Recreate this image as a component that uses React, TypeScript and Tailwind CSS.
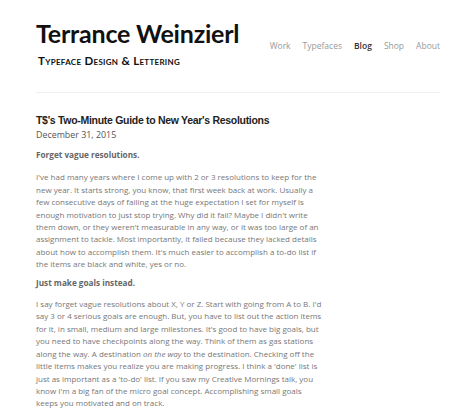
import React from "react";

const nav = ["Work", "Typefaces", "Blog", "Shop", "About"];

const para1 = [
  "I've had many years where I come up with 2 or 3 resolutions to keep for the",
  "new year. It starts strong, you know, that first week back at work. Usually a",
  "few consecutive days of failing at the huge expectation I set for myself is",
  "enough motivation to just stop trying. Why did it fail? Maybe I didn't write",
  "them down, or they weren't measurable in any way, or it was too large of an",
  "assignment to tackle. Most importantly, it failed because they lacked details",
  "about how to accomplish them. It's much easier to accomplish a to-do list if",
  "the items are black and white, yes or no.",
];

export default function App() {
  return (
    <div className="w-[474px] h-[412px] overflow-hidden bg-white">
      <div className="pl-[36px] pr-[34px]">
        <header className="flex items-end justify-between pt-[18px] pb-[25px] border-b border-[#f0f0f0]">
          <div>
            <h1 className="font-['Lato',sans-serif] font-bold text-[25px] leading-[30px] tracking-[-0.2px] text-[#111]">
              Terrance Weinzierl
            </h1>
            <div className="mt-[7px] pl-[2px] font-['Lato',sans-serif] font-bold text-[11.5px] leading-[12px] text-[#111] [font-variant-caps:small-caps] tracking-[0.3px]">
              Typeface Design &amp; Lettering
            </div>
          </div>
          <nav className="flex gap-[12px] mb-[15px] font-['Open_Sans',sans-serif] text-[8.5px] leading-[12px]">
            {nav.map((n) => (
              <span
                key={n}
                className={n === "Blog" ? "font-semibold text-[#333]" : "text-[#999]"}
              >
                {n}
              </span>
            ))}
          </nav>
        </header>
        <article className="w-[300px] pt-[20px] font-['Open_Sans',sans-serif] text-[8px] leading-[12.4px] text-[#777] whitespace-nowrap">
          <h2 className="font-['Liberation_Sans',Arial,sans-serif] font-bold text-[10.5px] leading-[14px] tracking-[-0.3px] text-[#222]">
            T$'s Two-Minute Guide to New Year's Resolutions
          </h2>
          <div className="mt-[2px] text-[8.9px] leading-[12px] text-[#555]">December 31, 2015</div>
          <p className="mt-[8px] font-bold text-[#666] text-[8.2px]">Forget vague resolutions.</p>
          <p className="mt-[10px]">
            {para1.map((l, i) => (
              <span key={i} className="block">
                {l}
              </span>
            ))}
          </p>
          <p className="mt-[6px] font-bold text-[#666] text-[8.2px]">Just make goals instead.</p>
          <p className="mt-[9px]">
            <span className="block">I say forget vague resolutions about X, Y or Z. Start with going from A to B. I'd</span>
            <span className="block">say 3 or 4 serious goals are enough. But, you have to list out the action items</span>
            <span className="block">for it, in small, medium and large milestones. It's good to have big goals, but</span>
            <span className="block">you need to have checkpoints along the way. Think of them as gas stations</span>
            <span className="block">
              along the way. A destination <em>on the way</em> to the destination. Checking off the
            </span>
            <span className="block">little items makes you realize you are making progress. I think a 'done' list is</span>
            <span className="block">just as important as a 'to-do' list. If you saw my Creative Mornings talk, you</span>
            <span className="block">know I'm a big fan of the micro goal concept. Accomplishing small goals</span>
            <span className="block">keeps you motivated and on track.</span>
          </p>
        </article>
      </div>
    </div>
  );
}
